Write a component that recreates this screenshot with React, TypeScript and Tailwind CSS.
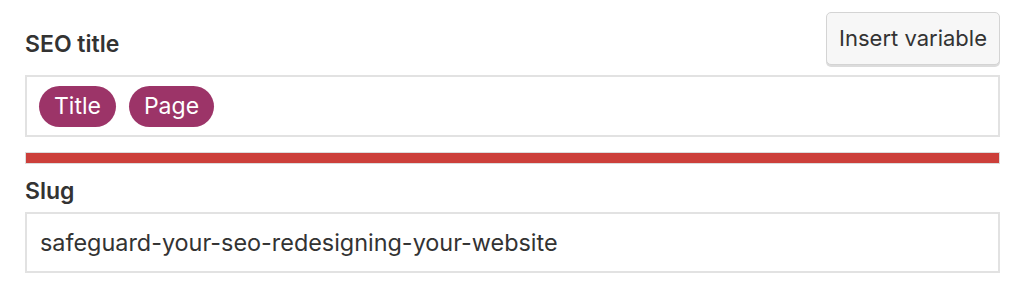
import React from 'react';

const Pill = ({ label }: { label: string }) => (
  <span className="inline-flex items-center h-[41px] px-[15px] rounded-full bg-[#9c3468] text-white text-[23px] leading-none">
    {label}
  </span>
);

const App: React.FC = () => {
  return (
    <div className="w-[1024px] h-[300px] bg-white pl-[25px] pr-[24px] pt-[12px] text-[#333] font-['Inter','Liberation_Sans',sans-serif]">
      {/* SEO title row */}
      <div className="flex items-end justify-between">
        <label className="text-[23px] font-semibold leading-none mb-[9px]">SEO title</label>
        <button className="h-[53px] px-[12px] rounded-[5px] border border-[#d4d4d4] bg-[#f7f7f7] shadow-[0_2px_0_#dcdcdc] text-[22px] text-[#333]">
          Insert variable
        </button>
      </div>

      <div className="mt-[10px] h-[62px] border-2 border-[#e2e2e2] flex items-center gap-[13px] px-[12px]">
        <Pill label="Title" />
        <Pill label="Page" />
      </div>

      {/* score bar */}
      <div className="mt-[15px] h-[12px] border border-[#dcdcdc] bg-[#cc3f3a]" />

      <label className="block mt-[16px] text-[23px] font-semibold leading-none">Slug</label>

      <div className="mt-[9px] h-[61px] border-2 border-[#e2e2e2] flex items-center px-[13px] text-[23.4px]">
        safeguard-your-seo-redesigning-your-website
      </div>
    </div>
  );
};

export default App;
